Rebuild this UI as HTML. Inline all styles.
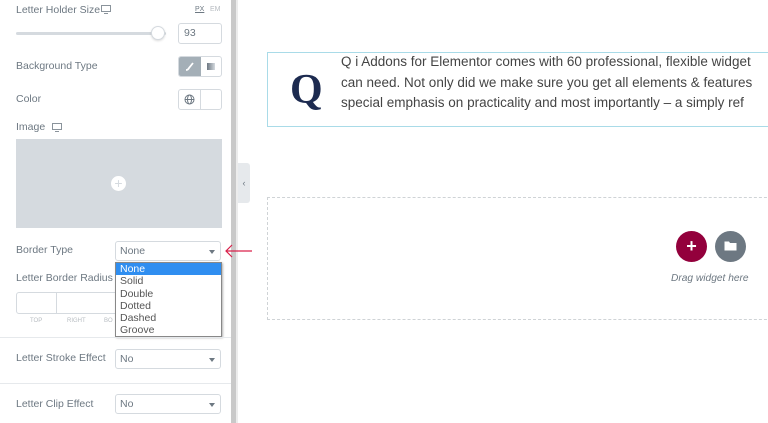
<!DOCTYPE html>
<html><head><meta charset="utf-8"><style>
*{margin:0;padding:0;box-sizing:border-box}
body{width:768px;height:423px;overflow:hidden;background:#fff;font-family:"Liberation Sans",sans-serif;position:relative}
.a{position:absolute}
.lbl{position:absolute;left:16px;font-size:10.5px;color:#6d7882}
.box{position:absolute;border:1px solid #d5dadf;background:#fff;border-radius:3px}
.sel{position:absolute;left:115px;width:106px;height:20px;border:1px solid #d5dadf;border-radius:3px;font-size:10.5px;color:#6d7882;padding:3px 0 0 4px;background:#fff}
.sel:after{content:"";position:absolute;right:5px;top:8px;border:3.5px solid transparent;border-top:4px solid #6d7882}
.opt{height:12.3px;font-size:10.5px;color:#555;padding-left:4px;line-height:12.3px}
</style></head><body>
<div class="a" style="left:0;top:0;width:231px;height:423px;background:#fff"></div>
<div class="a" style="left:231px;top:0;width:5px;height:423px;background:#c9c9c9"></div>
<div class="a" style="left:236px;top:0;width:2px;height:423px;background:#ececec"></div>

<div class="lbl" style="top:4px">Letter Holder Size</div>
<svg class="a" style="left:101px;top:5px" width="10" height="9"><rect x="0.5" y="0.5" width="9" height="6" fill="none" stroke="#8a939b"/><path d="M3 8.5h4" stroke="#8a939b"/></svg>
<div class="a" style="left:195px;top:6px;font-size:7px;color:#6d7882;text-decoration:underline">PX</div>
<div class="a" style="left:210px;top:6px;font-size:7px;color:#b7bcc1">EM</div>
<div class="a" style="left:16px;top:32px;width:150px;height:3px;background:#d5dadf;border-radius:2px"></div>
<div class="a" style="left:151px;top:26px;width:14px;height:14px;border-radius:50%;background:#fff;border:1px solid #d5dadf;box-shadow:0 1px 2px rgba(0,0,0,.15)"></div>
<div class="box" style="left:178px;top:23px;width:44px;height:21px;font-size:10.5px;color:#6d7882;padding:3px 5px">93</div>

<div class="lbl" style="top:60px">Background Type</div>
<div class="box" style="left:178px;top:56px;width:44px;height:21px;overflow:hidden">
<div class="a" style="left:0;top:0;width:22px;height:21px;background:#a4afb7"></div>
<svg class="a" style="left:6px;top:5px" width="10" height="10"><path d="M1 8 Q3 8 4 6 L8 1" stroke="#fff" stroke-width="1.8" fill="none"/></svg>
<div class="a" style="left:28px;top:6px;width:8px;height:7px;background:linear-gradient(90deg,#6d7882,#d5dadf)"></div></div>

<div class="lbl" style="top:93px">Color</div>
<div class="box" style="left:178px;top:89px;width:44px;height:21px"><div class="a" style="left:21px;top:0;width:1px;height:19px;background:#d5dadf"></div>
<svg class="a" style="left:5px;top:4px" width="11" height="11"><circle cx="5.5" cy="5.5" r="4.5" fill="none" stroke="#6d7882"/><ellipse cx="5.5" cy="5.5" rx="2" ry="4.5" fill="none" stroke="#6d7882"/><path d="M1 5.5h9" stroke="#6d7882"/></svg></div>

<div class="lbl" style="top:121px">Image</div>
<svg class="a" style="left:52px;top:123px" width="10" height="9"><rect x="0.5" y="0.5" width="9" height="6" fill="none" stroke="#8a939b"/><path d="M3 8.5h4" stroke="#8a939b"/></svg>
<div class="a" style="left:16px;top:139px;width:206px;height:89px;background:#d5dadf"></div>
<div class="a" style="left:111px;top:176px;width:15px;height:15px;border-radius:50%;background:#fff;color:#d5dadf;font-size:14px;line-height:15px;text-align:center">+</div>

<div class="lbl" style="top:244px">Border Type</div>
<div class="sel" style="top:241px">None</div>
<svg class="a" style="left:224px;top:244px" width="30" height="14"><path d="M28 7H2M8 1L2 7l6 6" stroke="#d9204a" stroke-width="1.2" fill="none"/></svg>

<div class="lbl" style="top:272px">Letter Border Radius</div>
<div class="box" style="left:16px;top:292px;width:100px;height:22px;border-radius:3px 0 0 3px"></div>
<div class="a" style="left:56px;top:292px;width:1px;height:22px;background:#d5dadf"></div>
<div class="a" style="left:30px;top:318px;font-size:6px;color:#b7bcc1">TOP</div>
<div class="a" style="left:67px;top:318px;font-size:6px;color:#b7bcc1">RIGHT</div>
<div class="a" style="left:104px;top:318px;font-size:6px;color:#b7bcc1">BO</div>

<div class="a" style="left:115px;top:262px;width:107px;height:75px;background:#fff;border:1px solid #888;box-shadow:1px 1px 2px rgba(0,0,0,.3)">
<div class="opt" style="background:#2f8ef0;color:#fff">None</div><div class="opt">Solid</div><div class="opt">Double</div><div class="opt">Dotted</div><div class="opt">Dashed</div><div class="opt">Groove</div></div>

<div class="a" style="left:0;top:337px;width:231px;height:1px;background:#e6e9ec"></div>
<div class="lbl" style="top:352px">Letter Stroke Effect</div>
<div class="sel" style="top:349px">No</div>
<div class="a" style="left:0;top:383px;width:231px;height:1px;background:#e6e9ec"></div>
<div class="lbl" style="top:398px">Letter Clip Effect</div>
<div class="sel" style="top:394px">No</div>

<div class="a" style="left:238px;top:163px;width:12px;height:40px;background:#e6e9ec;border-radius:0 3px 3px 0;font-size:9px;color:#6d7882;line-height:40px;text-align:center">‹</div>

<div class="a" style="left:267px;top:52px;width:520px;height:75px;border:1px solid #a9dbe8"></div>
<div class="a" style="left:290px;top:69px;font-family:'Liberation Serif',serif;font-size:42px;color:#1d2b50;line-height:42px;font-weight:bold">Q</div>
<div class="a" style="left:341px;top:52px;width:427px;overflow:hidden;white-space:nowrap;font-size:13.5px;line-height:20.5px;color:#444">Q i Addons for Elementor comes with 60 professional, flexible widget<br>can need. Not only did we make sure you get all elements &amp; features<br>special emphasis on practicality and most importantly – a simply ref</div>

<div class="a" style="left:267px;top:197px;width:520px;height:123px;border:1px dashed #cfd3d6"></div>
<div class="a" style="left:676px;top:231px;width:31px;height:31px;border-radius:50%;background:#93003c;color:#fff;font-size:18px;line-height:30px;text-align:center;font-weight:bold">+</div>
<div class="a" style="left:715px;top:231px;width:31px;height:31px;border-radius:50%;background:#6d7882"></div>
<svg class="a" style="left:724px;top:240px" width="13" height="11"><path d="M0.5 1.5h4.5l1 1.5h6.5v7.5h-12z" fill="#fff"/></svg>
<div class="a" style="left:671px;top:273px;font-size:10.2px;font-style:italic;color:#6d7882">Drag widget here</div>
</body></html>
